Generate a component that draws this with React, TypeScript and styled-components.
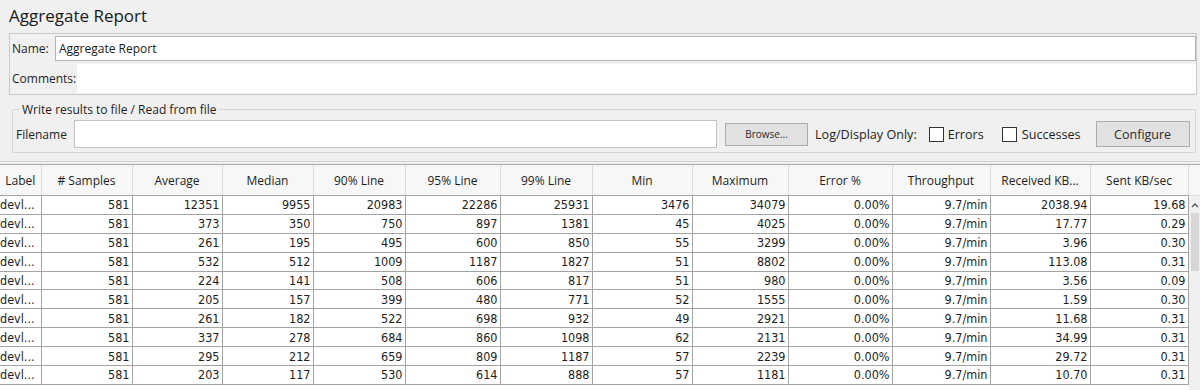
import React from "react";
import styled, { createGlobalStyle } from "styled-components";

const GlobalStyle = createGlobalStyle`
  html, body {
    margin: 0;
    padding: 0;
    background: #f0f0f0;
  }
  body {
    font-family: "Open Sans", "Noto Sans", sans-serif;
    color: #1e1e1e;
  }
`;

const Page = styled.div`
  width: 1200px;
  height: 390px;
  overflow: hidden;
  display: flex;
  flex-direction: column;
  background: #f0f0f0;
`;

const Title = styled.h1`
  margin: 0;
  height: 33px;
  padding: 4px 0 0 9px;
  box-sizing: border-box;
  font-family: "Open Sans", sans-serif;
  font-weight: 400;
  font-size: 17px;
  line-height: 24px;
  color: #1a1a1a;
`;

const NamePanel = styled.div`
  margin: 0 3px 0 9px;
  border: 1px solid #c9c9c9;
  display: flex;
  flex-direction: column;
  gap: 3px;
  padding: 2px 0 0 0;
  height: 62px;
  box-sizing: border-box;
`;

const FieldRow = styled.div<{ $h: number }>`
  display: flex;
  align-items: stretch;
  height: ${(p) => p.$h}px;
`;

const FieldLabel = styled.label<{ $w: number }>`
  width: ${(p) => p.$w}px;
  flex: none;
  display: flex;
  align-items: center;
  padding-left: 2px;
  box-sizing: border-box;
  font-size: 12px;
  color: #1e1e1e;
`;

const TextBox = styled.div<{ $bordered?: boolean }>`
  flex: 1;
  background: #fff;
  border: 1px solid ${(p) => (p.$bordered ? "#b5b5b5" : "#fff")};
  display: flex;
  align-items: center;
  padding-left: 3px;
  font-size: 12px;
  color: #1a1a1a;
`;

const FileGroup = styled.fieldset`
  margin: 6px 4px 0 12px;
  padding: 2px 4px 4px 3px;
  border: 1px solid #d5d5d5;
  border-radius: 2px;
  min-width: 0;
`;

const Legend = styled.legend`
  padding: 0 2px;
  margin-left: 4px;
  font-size: 12px;
  line-height: 17px;
  color: #1e1e1e;
`;

const FileRow = styled.div`
  display: flex;
  align-items: center;
  height: 28px;
  font-size: 12.6px;
`;

const FileLabel = styled.span`
  width: 58px;
  flex: none;
  font-size: 12px;
`;

const FileInput = styled.div`
  width: 643px;
  flex: none;
  align-self: stretch;
  box-sizing: border-box;
  background: #fff;
  border: 1px solid #c2c2c2;
`;

const Button = styled.div<{ $w: number; $ml: number; $small?: boolean }>`
  width: ${(p) => p.$w}px;
  margin-left: ${(p) => p.$ml}px;
  height: ${(p) => (p.$small ? 23 : 26)}px;
  box-sizing: border-box;
  flex: none;
  background: #e1e1e1;
  border: 1px solid #adadad;
  display: flex;
  align-items: center;
  justify-content: center;
  font-size: ${(p) => (p.$small ? 10 : 12.5)}px;
  color: #2a2a2a;
`;

const Text = styled.span<{ $ml: number }>`
  margin-left: ${(p) => p.$ml}px;
  white-space: nowrap;
`;

const Check = styled.span<{ $ml: number }>`
  margin-left: ${(p) => p.$ml}px;
  width: 15px;
  height: 15px;
  box-sizing: border-box;
  border: 1px solid #333;
  background: #fff;
  flex: none;
`;

const Splitter = styled.div`
  margin-top: 8px;
  height: 2px;
  border-top: 1px solid #d0d0d0;
  border-bottom: 1px solid #a9a9a9;
`;

const TableArea = styled.div`
  display: flex;
  flex: 1;
  min-height: 0;
  background: #fff;
`;

const Grid = styled.table`
  border-collapse: collapse;
  table-layout: fixed;
  width: 1188px;
  flex: none;
  background: #fff;
  align-self: flex-start;
`;

const HeadCell = styled.th`
  height: 30px;
  padding: 0;
  background: #f7f7f7;
  border-right: 1px solid #dadada;
  border-bottom: 1px solid #a3a3a3;
  font-family: "Open Sans", sans-serif;
  font-weight: 400;
  font-size: 12px;
  color: #1e1e1e;
  text-align: center;
  white-space: nowrap;
  overflow: hidden;
`;

const Cell = styled.td<{ $left?: boolean }>`
  height: 17.9px;
  padding: 0 ${(p) => (p.$left ? 0 : 2)}px 0 0;
  border: 1px solid #a3a3a3;
  border-top: none;
  font-family: "DejaVu Sans Condensed", "DejaVu Sans", sans-serif;
  font-size: 12.5px;
  line-height: 17px;
  color: #1e1e1e;
  text-align: ${(p) => (p.$left ? "left" : "right")};
  white-space: nowrap;
  overflow: hidden;
  &:first-child {
    border-left: none;
  }
`;

const ScrollColumn = styled.div`
  width: 12px;
  flex: none;
  display: flex;
  flex-direction: column;
`;

const ScrollCorner = styled.div`
  height: 31px;
  background: #f7f7f7;
  border-bottom: 1px solid #e0e0e0;
  box-sizing: border-box;
`;

const Track = styled.div`
  flex: 1;
  background: #f0f0f0;
  display: flex;
  flex-direction: column;
  align-items: center;
`;

const Arrow = styled.div`
  height: 17px;
  display: flex;
  align-items: center;
  justify-content: center;
`;

const Thumb = styled.div`
  width: 8px;
  height: 58px;
  background: #d6d6d6;
`;

const widths = [41, 91, 90, 91, 92, 95, 92, 100, 96, 104, 98, 100, 98];

const headers = [
  "Label",
  "# Samples",
  "Average",
  "Median",
  "90% Line",
  "95% Line",
  "99% Line",
  "Min",
  "Maximum",
  "Error %",
  "Throughput",
  "Received KB...",
  "Sent KB/sec",
];

const rows: string[][] = [
  ["581", "12351", "9955", "20983", "22286", "25931", "3476", "34079", "2038.94", "19.68"],
  ["581", "373", "350", "750", "897", "1381", "45", "4025", "17.77", "0.29"],
  ["581", "261", "195", "495", "600", "850", "55", "3299", "3.96", "0.30"],
  ["581", "532", "512", "1009", "1187", "1827", "51", "8802", "113.08", "0.31"],
  ["581", "224", "141", "508", "606", "817", "51", "980", "3.56", "0.09"],
  ["581", "205", "157", "399", "480", "771", "52", "1555", "1.59", "0.30"],
  ["581", "261", "182", "522", "698", "932", "49", "2921", "11.68", "0.31"],
  ["581", "337", "278", "684", "860", "1098", "62", "2131", "34.99", "0.31"],
  ["581", "295", "212", "659", "809", "1187", "57", "2239", "29.72", "0.31"],
  ["581", "203", "117", "530", "614", "888", "57", "1181", "10.70", "0.31"],
];

export default function App() {
  return (
    <Page>
      <GlobalStyle />
      <Title>Aggregate Report</Title>
      <NamePanel>
        <FieldRow $h={25}>
          <FieldLabel $w={45}>Name:</FieldLabel>
          <TextBox $bordered>Aggregate Report</TextBox>
        </FieldRow>
        <FieldRow $h={29}>
          <FieldLabel $w={67}>Comments:</FieldLabel>
          <TextBox />
        </FieldRow>
      </NamePanel>
      <FileGroup>
        <Legend>Write results to file / Read from file</Legend>
        <FileRow>
          <FileLabel>Filename</FileLabel>
          <FileInput />
          <Button $w={83} $ml={8} $small>
            Browse...
          </Button>
          <Text $ml={7}>Log/Display Only:</Text>
          <Check $ml={12} />
          <Text $ml={4}>Errors</Text>
          <Check $ml={18} />
          <Text $ml={5}>Successes</Text>
          <Button $w={94} $ml={15}>
            Configure
          </Button>
        </FileRow>
      </FileGroup>
      <Splitter />
      <TableArea>
        <Grid>
          <colgroup>
            {widths.map((w, i) => (
              <col key={i} style={{ width: w }} />
            ))}
          </colgroup>
          <thead>
            <tr>
              {headers.map((h) => (
                <HeadCell key={h}>{h}</HeadCell>
              ))}
            </tr>
          </thead>
          <tbody>
            {rows.map((r, i) => (
              <tr key={i}>
                <Cell $left>devl...</Cell>
                {r.slice(0, 8).map((v, j) => (
                  <Cell key={j}>{v}</Cell>
                ))}
                <Cell>0.00%</Cell>
                <Cell>9.7/min</Cell>
                <Cell>{r[8]}</Cell>
                <Cell>{r[9]}</Cell>
              </tr>
            ))}
          </tbody>
        </Grid>
        <ScrollColumn>
          <ScrollCorner />
          <Track>
            <Arrow>
              <svg width="8" height="6" viewBox="0 0 8 6">
                <path d="M1 5 L4 2 L7 5" fill="none" stroke="#555" strokeWidth="1.3" />
              </svg>
            </Arrow>
            <Thumb />
          </Track>
        </ScrollColumn>
      </TableArea>
    </Page>
  );
}
